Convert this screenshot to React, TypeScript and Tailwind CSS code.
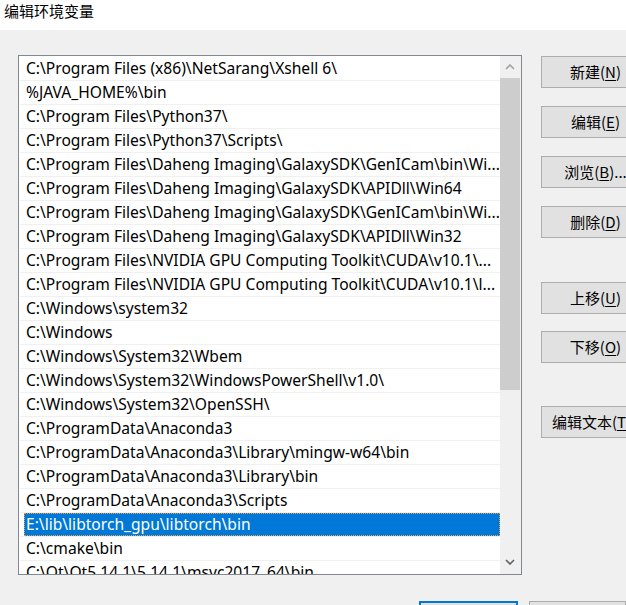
import * as React from "react";

const paths = [
  "C:\\Program Files (x86)\\NetSarang\\Xshell 6\\",
  "%JAVA_HOME%\\bin",
  "C:\\Program Files\\Python37\\",
  "C:\\Program Files\\Python37\\Scripts\\",
  "C:\\Program Files\\Daheng Imaging\\GalaxySDK\\GenICam\\bin\\Wi...",
  "C:\\Program Files\\Daheng Imaging\\GalaxySDK\\APIDll\\Win64",
  "C:\\Program Files\\Daheng Imaging\\GalaxySDK\\GenICam\\bin\\Wi...",
  "C:\\Program Files\\Daheng Imaging\\GalaxySDK\\APIDll\\Win32",
  "C:\\Program Files\\NVIDIA GPU Computing Toolkit\\CUDA\\v10.1\\...",
  "C:\\Program Files\\NVIDIA GPU Computing Toolkit\\CUDA\\v10.1\\l...",
  "C:\\Windows\\system32",
  "C:\\Windows",
  "C:\\Windows\\System32\\Wbem",
  "C:\\Windows\\System32\\WindowsPowerShell\\v1.0\\",
  "C:\\Windows\\System32\\OpenSSH\\",
  "C:\\ProgramData\\Anaconda3",
  "C:\\ProgramData\\Anaconda3\\Library\\mingw-w64\\bin",
  "C:\\ProgramData\\Anaconda3\\Library\\bin",
  "C:\\ProgramData\\Anaconda3\\Scripts",
  "E:\\lib\\libtorch_gpu\\libtorch\\bin",
  "C:\\cmake\\bin",
  "C:\\Qt\\Qt5.14.1\\5.14.1\\msvc2017_64\\bin",
];

const SELECTED = 19;

// Win10 style push button with underlined access key
function DlgButton({
  label,
  accel,
  suffix = "",
  className = "",
}: {
  label: string;
  accel: string;
  suffix?: string;
  className?: string;
}) {
  return (
    <div
      className={`flex h-[32px] w-[109px] shrink-0 items-center justify-center border border-[#adadad] bg-[#e1e1e1] text-[15px] text-black ${className}`}
    >
      <span className="whitespace-nowrap">
        {label}(<span className="underline underline-offset-2">{accel}</span>){suffix}
      </span>
    </div>
  );
}

function Chevron({ up, color }: { up?: boolean; color: string }) {
  return (
    <svg width="10" height="6" viewBox="0 0 10 6">
      <path
        d={up ? "M1 5 L5 1 L9 5" : "M1 1 L5 5 L9 1"}
        fill="none"
        stroke={color}
        strokeWidth="1.6"
      />
    </svg>
  );
}

export default function App() {
  return (
    <div className="h-[605px] w-[626px] overflow-hidden bg-[#f0f0f0] font-['Noto_Sans','Noto_Sans_CJK_SC',sans-serif] text-black">
      {/* Title bar */}
      <div className="h-[30px] bg-white pl-[4px] pt-[1px] text-[15px] leading-[20px] font-['Noto_Sans_CJK_SC',sans-serif]">
        编辑环境变量
      </div>

      <div className="flex pl-[18px] pt-[25px]">
        {/* List box */}
        <div className="flex h-[520px] w-[504px] shrink-0 border border-[#828790] bg-white">
          <div className="flex-1 overflow-hidden pl-[1px]">
            {paths.map((p, i) => (
              <div
                key={i}
                className={`h-[24px] ${i === 0 ? "border-t border-white" : "border-t border-[#f0f0f0]"}`}
              >
                <div
                  className={`ml-[4px] flex h-[23px] items-center overflow-hidden whitespace-nowrap pl-[1px] text-[15.6px] ${
                    i === SELECTED
                      ? "border border-dotted border-[#f0a040] bg-[#0078d7] text-white"
                      : "border border-transparent"
                  }`}
                >
                  {p}
                </div>
              </div>
            ))}
          </div>

          {/* Scrollbar */}
          <div className="flex w-[21px] shrink-0 flex-col bg-[#f0f0f0]">
            <div className="flex h-[22px] items-center justify-center pr-[1px]">
              <Chevron up color="#a3a3a3" />
            </div>
            <div className="h-[312px] w-[20px] bg-[#cdcdcd]" />
            <div className="flex-1" />
            <div className="flex h-[22px] items-center justify-center pr-[1px] pb-[3px]">
              <Chevron color="#606060" />
            </div>
          </div>
        </div>

        {/* Buttons */}
        <div className="ml-[19px] flex flex-col pt-[1px] font-['Noto_Sans_CJK_SC',sans-serif]">
          <DlgButton label="新建" accel="N" />
          <DlgButton label="编辑" accel="E" className="mt-[18px]" />
          <DlgButton label="浏览" accel="B" suffix="..." className="mt-[18px]" />
          <DlgButton label="删除" accel="D" className="mt-[18px]" />
          <DlgButton label="上移" accel="U" className="mt-[44px]" />
          <DlgButton label="下移" accel="O" className="mt-[17px]" />
          <DlgButton label="编辑文本" accel="T" className="mt-[43px] pr-[8px]" />
        </div>
      </div>

      {/* OK / Cancel */}
      <div className="mt-[26px] flex pl-[419px]">
        <div className="h-[32px] w-[111px] border-2 border-[#0078d7] bg-[#e1e1e1]" />
        <div className="ml-[11px] h-[32px] w-[109px] border border-[#adadad] bg-[#e1e1e1]" />
      </div>
    </div>
  );
}
